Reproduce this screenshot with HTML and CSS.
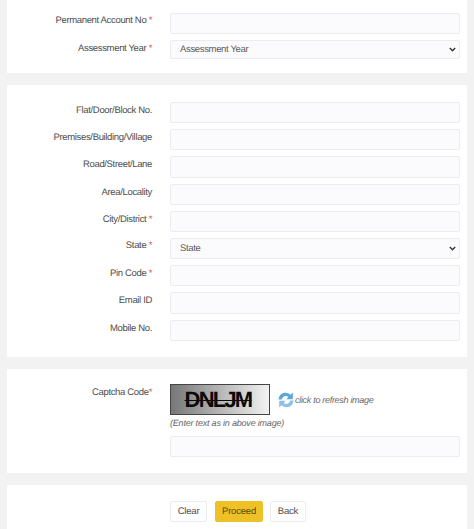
FILE: index.html
```html
<!DOCTYPE html>
<html lang="en">
<head>
<meta charset="utf-8">
<title>Form</title>
<link rel="stylesheet" href="styles.css">
</head>
<body>
<main class="page">
  <section class="card card-first">
    <div class="rows">
      <label class="label label-top">Permanent Account No <span class="req">*</span></label>
      <input class="field" type="text">
      <label class="label">Assessment Year <span class="req">*</span></label>
      <select class="field select"><option>Assessment Year</option></select>
    </div>
  </section>
  <section class="card card-address">
    <div class="rows">
      <label class="label">Flat/Door/Block No.</label>
      <input class="field" type="text">
      <label class="label">Premises/Building/Village</label>
      <input class="field" type="text">
      <label class="label">Road/Street/Lane</label>
      <input class="field" type="text">
      <label class="label">Area/Locality</label>
      <input class="field" type="text">
      <label class="label">City/District <span class="req">*</span></label>
      <input class="field" type="text">
      <label class="label label-top">State <span class="req">*</span></label>
      <select class="field select select-tall"><option>State</option></select>
      <label class="label">Pin Code <span class="req">*</span></label>
      <input class="field" type="text">
      <label class="label">Email ID</label>
      <input class="field" type="text">
      <label class="label">Mobile No.</label>
      <input class="field" type="text">
    </div>
  </section>
  <section class="card card-captcha">
    <div class="captcha-grid">
      <label class="label captcha-label">Captcha Code<span class="req">*</span></label>
      <div class="captcha-body">
        <div class="captcha-top">
          <div class="captcha-img"><span class="captcha-text">DNLJM</span></div>
          <svg class="refresh" viewBox="0 0 16 18" width="16" height="18" aria-hidden="true">
            <path d="M.5 8.500C.8 4.300 3.800 1.800 7.500 1.800c1.900 0 3.500.7 4.700 1.900l2.600-2.200v6.800H8.300l2-2.200c-.7-.6-1.600-1-2.700-1-1.900 0-3.200 1.200-3.700 3.400z" fill="#5fa6dd"/>
            <path d="M15.500 9.500c-.3 4.200-3.300 6.700-7 6.700-1.900 0-3.500-.7-4.700-1.900l-2.600 2.200V9.700h6.500l-2 2.200c.7.6 1.600 1 2.700 1 1.900 0 3.200-1.200 3.700-3.400z" fill="#8cc0e8"/>
          </svg>
          <span class="hint hint-refresh">click to refresh image</span>
        </div>
        <p class="hint hint-below">(Enter text as in above image)</p>
        <input class="field" type="text">
      </div>
    </div>
  </section>
  <section class="card card-actions">
    <button class="btn btn-clear" type="button">Clear</button>
    <button class="btn btn-primary" type="button">Proceed</button>
    <button class="btn btn-back" type="button">Back</button>
  </section>
</main>
</body>
</html>
```
FILE: styles.css
```css
* { box-sizing: border-box; }
html, body { margin: 0; padding: 0; }
body {
  background: #f2f2f2;
  font-family: "Liberation Sans", Arial, sans-serif;
  font-size: 9.5px;
  letter-spacing: -0.34px;
  text-rendering: geometricPrecision;
  color: #4d4d4d;
  height: 529px;
  overflow: hidden;
}
.page {
  display: flex;
  flex-direction: column;
  gap: 12px;
  padding: 0 7px;
}
.card { background: #fff; }
.card-first { height: 73px; padding-top: 13px; }
.card-address { height: 272px; padding-top: 17px; }
.card-captcha { height: 104px; padding-top: 15px; }
.card-actions {
  height: 44px;
  padding: 16px 0 0 163px;
  display: flex;
  align-items: flex-start;
}
.rows {
  display: grid;
  grid-template-columns: 145px 290px;
  column-gap: 18px;
  row-gap: 6px;
  align-items: start;
}
.label {
  display: block;
  text-align: right;
  line-height: 14px;
  padding-top: 2px;
  white-space: nowrap;
}
.label-top { padding-top: 1px; }
.req { color: #d9534f; }
.field {
  display: block;
  width: 290px;
  height: 21.2px;
  border: 1px solid #ececf0;
  border-radius: 2px;
  background-color: #fbfbfe;
  margin: 0;
  padding: 0 9px;
  font: 9.5px "Liberation Sans", Arial, sans-serif;
  letter-spacing: -0.34px;
  text-rendering: geometricPrecision;
  color: #5c5c5c;
}
.select {
  height: 19px;
  appearance: none;
  -webkit-appearance: none;
  background-image: url("data:image/svg+xml,%3Csvg xmlns='http://www.w3.org/2000/svg' width='7' height='5'%3E%3Cpath d='M.8 1l2.700 2.700L6.200 1' fill='none' stroke='%23333' stroke-width='1.400'/%3E%3C/svg%3E");
  background-repeat: no-repeat;
  background-position: right 3px center;
}
.select-tall { height: 21.2px; }
.captcha-grid {
  display: grid;
  grid-template-columns: 145px 290px;
  column-gap: 18px;
}
.captcha-label { padding-top: 2px; }
.captcha-body { display: flex; flex-direction: column; }
.captcha-top { display: flex; align-items: center; }
.captcha-img {
  width: 100px;
  height: 31px;
  border: 1px solid #444;
  background: linear-gradient(90deg, #777 0%, #b0b0b0 45%, #f2f2f2 100%);
  display: flex;
  align-items: center;
  justify-content: center;
}
.captcha-text {
  font: bold 22px "Liberation Sans", Arial, sans-serif;
  color: #0a0a0a;
  letter-spacing: -1.800px;
  text-decoration: line-through;
  text-decoration-thickness: 1px;
  margin-right: 4px;
}
.refresh { margin-left: 8px; margin-right: 1px; }
.hint { font-style: italic; color: #666; font-size: 9px; letter-spacing: -0.2px; }
.hint-refresh { letter-spacing: -0.3px; }
.hint-below { margin: 2px 0 6px; line-height: 13px; }
.btn {
  height: 21px;
  padding: 0;
  background: #fff;
  border: 1px solid #ececec;
  border-radius: 2px;
  font: 9.5px "Liberation Sans", Arial, sans-serif;
  letter-spacing: -0.2px;
  text-rendering: geometricPrecision;
  color: #4d4d4d;
}
.btn-clear { width: 37px; }
.btn-primary {
  width: 48px;
  margin-left: 8px;
  background: #eec226;
  border-color: #eec226;
  color: #5a4a10;
}
.btn-back { width: 36px; margin-left: 7px; }
```
